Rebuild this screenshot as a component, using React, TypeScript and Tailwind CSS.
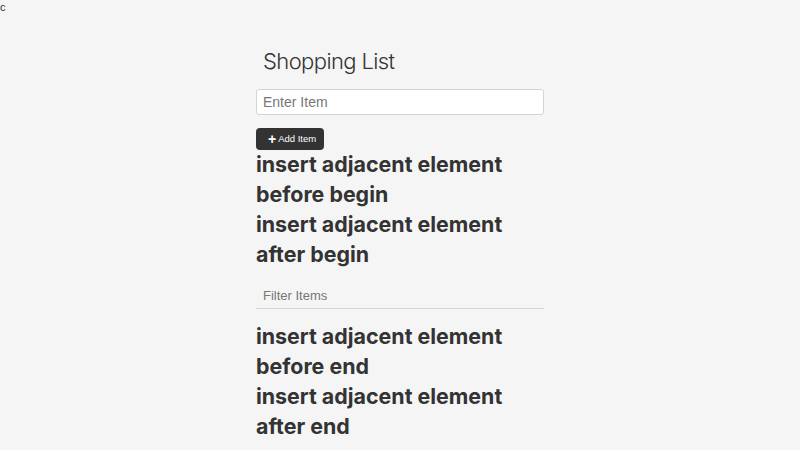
import { useState } from 'react'

const items = [
  'insert adjacent element before begin',
  'insert adjacent element after begin',
]

const lowerItems = [
  'insert adjacent element before end',
  'insert adjacent element after end',
]

export default function App() {
  const [item, setItem] = useState('')
  const [filter, setFilter] = useState('')

  return (
    <div className="min-h-[450px] bg-[#f5f5f5] text-[#333] font-['Inter',sans-serif]">
      <div className="h-[14px] text-[11px] leading-[14px] font-['Liberation_Sans',sans-serif] text-[#333]">c</div>
      <div className="mx-auto w-[288px] pt-[32px]">
        {/* Header */}
        <h1 className="pl-[7px] text-[22px] leading-[30px] font-light tracking-[-0.6px] text-[#333]">Shopping List</h1>

        {/* Form */}
        <form className="mt-[13px]" onSubmit={(e) => e.preventDefault()}>
          <input
            value={item}
            onChange={(e) => setItem(e.target.value)}
            placeholder="Enter Item"
            className="block w-full h-[26px] px-[6px] bg-white border border-[#d4d4d4] rounded-[3px] text-[14px] font-['Liberation_Sans',sans-serif] placeholder:text-[#777] outline-none"
          />
          <button
            type="submit"
            className="mt-[13px] flex items-center gap-[2px] h-[22px] pl-[12px] pr-[8px] bg-[#333] text-white rounded-[4px] text-[9.5px] font-['Liberation_Sans',sans-serif]"
          >
            <span className="text-[14px] leading-none font-bold">+</span>
            Add Item
          </button>
        </form>

        <div className="-mt-[1px] text-[21.4px] leading-[30px] font-bold text-[#333]">
          {items.map((i) => (
            <h2 key={i}>{i}</h2>
          ))}
        </div>

        {/* Filter */}
        <input
          value={filter}
          onChange={(e) => setFilter(e.target.value)}
          placeholder="Filter Items"
          className="mt-[14px] block w-full h-[26px] px-[7px] bg-transparent border-b border-[#d4d4d4] text-[13px] font-['Liberation_Sans',sans-serif] placeholder:text-[#777] outline-none"
        />

        <div className="mt-[12px] text-[21.4px] leading-[30px] font-bold text-[#333]">
          {lowerItems.map((i) => (
            <h2 key={i}>{i}</h2>
          ))}
        </div>
      </div>
    </div>
  )
}
